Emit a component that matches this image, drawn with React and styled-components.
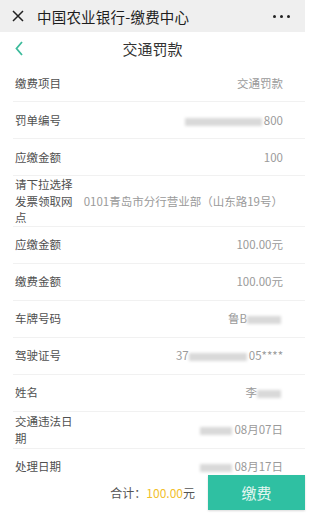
import React from "react";
import styled, { createGlobalStyle } from "styled-components";

const GlobalStyle = createGlobalStyle`
  body {
    margin: 0;
    background: #fff;
    font-family: "Noto Sans CJK SC", "Noto Sans", sans-serif;
  }
`;

const Page = styled.div`
  width: 305px;
  min-height: 515px;
  background: #fff;
`;

const TopBar = styled.div`
  height: 32px;
  background: #efefef;
  display: flex;
  align-items: center;
  padding-left: 12px;
`;

const BarTitle = styled.span`
  margin-left: 13px;
  font-size: 14.5px;
  color: #1e1e1e;
  letter-spacing: 0.2px;
`;

const More = styled.div`
  margin-left: auto;
  margin-right: 15px;
  display: flex;
  gap: 4px;
`;

const Dot = styled.span`
  width: 3px;
  height: 3px;
  border-radius: 50%;
  background: #222;
`;

const Header = styled.div`
  height: 32px;
  display: grid;
  grid-template-columns: 1fr auto 1fr;
  align-items: center;
`;

const Back = styled.div`
  padding-left: 15px;
  display: flex;
  align-items: center;
`;

const HeaderTitle = styled.span`
  font-size: 15px;
  color: #333;
`;

const List = styled.div`
  margin-top: 1px;
`;

const Row = styled.div`
  display: flex;
  align-items: center;
  min-height: 36px;
  margin-left: 13px;
  padding: 0 22px 0 2px;
  border-bottom: 1px solid #f1f1f1;
  font-size: 11.5px;
  line-height: 16.5px;
`;

const Label = styled.div`
  width: 58px;
  flex-shrink: 0;
  color: #505050;
`;

const Value = styled.div`
  flex: 1;
  text-align: right;
  color: #9a9a9a;
  white-space: nowrap;
`;

const Blur = styled.span`
  display: inline-block;
  vertical-align: middle;
  width: ${(p) => p.w}px;
  height: 8px;
  background: #d9d9d9;
  filter: blur(1.5px);
  margin-right: 2px;
`;

const BottomBar = styled.div`
  position: fixed;
  left: 0;
  bottom: 0;
  width: 305px;
  height: 40px;
  padding-bottom: 5px;
  box-sizing: border-box;
  background: #fff;
  display: flex;
  align-items: center;
  justify-content: flex-end;
  gap: 13px;
`;

const Total = styled.span`
  font-size: 12px;
  color: #555;
`;

const Amount = styled.span`
  color: #f2bf2c;
`;

const PayButton = styled.button`
  width: 97px;
  height: 35px;
  border: none;
  background: #2fc0a2;
  color: #e4f7f1;
  font-family: inherit;
  font-size: 15px;
  box-shadow: 0 1px 2px rgba(0, 0, 0, 0.15);
`;

const rows = [
  { label: "缴费项目", value: "交通罚款" },
  { label: "罚单编号", blur: 77, value: "800" },
  { label: "应缴金额", value: "100" },
  { label: "请下拉选择发票领取网点", value: "0101青岛市分行营业部（山东路19号）" },
  { label: "应缴金额", value: "100.00元" },
  { label: "缴费金额", value: "100.00元" },
  { label: "车牌号码", prefix: "鲁B", blur: 34 },
  { label: "驾驶证号", prefix: "37", blur: 58, value: "05****" },
  { label: "姓名", prefix: "李", blur: 24 },
  { label: "交通违法日期", blur: 32, value: "08月07日" },
  { label: "处理日期", blur: 32, value: "08月17日" },
];

export default function App() {
  return (
    <Page>
      <GlobalStyle />
      <TopBar>
        <svg width="12" height="12" viewBox="0 0 12 12">
          <path d="M1 1L11 11M11 1L1 11" stroke="#222" strokeWidth="1.5" />
        </svg>
        <BarTitle>中国农业银行-缴费中心</BarTitle>
        <More>
          <Dot />
          <Dot />
          <Dot />
        </More>
      </TopBar>
      <Header>
        <Back>
          <svg width="8" height="15" viewBox="0 0 8 15">
            <polyline
              points="7,1 1.5,7.5 7,14"
              fill="none"
              stroke="#3dbb9c"
              strokeWidth="1.8"
            />
          </svg>
        </Back>
        <HeaderTitle>交通罚款</HeaderTitle>
        <span />
      </Header>
      <List>
        {rows.map((r, i) => (
          <Row key={i}>
            <Label>{r.label}</Label>
            <Value>
              {r.prefix}
              {r.blur && <Blur w={r.blur} />}
              {r.value}
            </Value>
          </Row>
        ))}
      </List>
      <BottomBar>
        <Total>
          合计：<Amount>100.00</Amount>元
        </Total>
        <PayButton>缴费</PayButton>
      </BottomBar>
    </Page>
  );
}
